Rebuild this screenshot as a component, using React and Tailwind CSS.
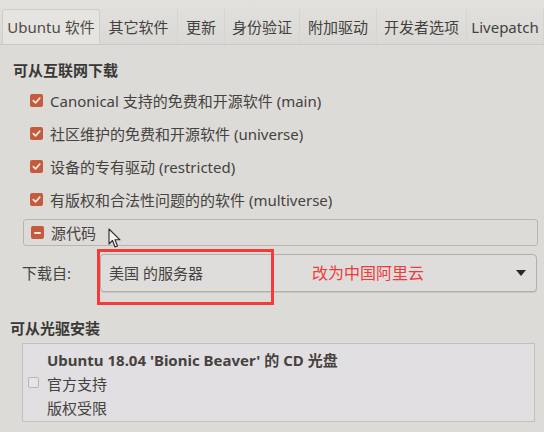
import React from 'react';

const tabs = [
    { label: 'Ubuntu 软件', w: 'w-[98px]', active: true },
    { label: '其它软件', w: 'w-[78px]' },
    { label: '更新', w: 'w-[47px]' },
    { label: '身份验证', w: 'w-[75px]' },
    { label: '附加驱动', w: 'w-[77px]' },
    { label: '开发者选项', w: 'w-[90px]' },
    { label: 'Livepatch', w: 'w-[77px]' },
];

const sources = [
    'Canonical 支持的免费和开源软件 (main)',
    '社区维护的免费和开源软件 (universe)',
    '设备的专有驱动 (restricted)',
    '有版权和合法性问题的的软件 (multiverse)',
];

function CheckedBox() {
    return (
        <span className="flex items-center justify-center w-[13px] h-[13px] rounded-[2px] bg-[#c55a3c] shrink-0">
            <svg viewBox="0 0 12 12" className="w-[11px] h-[11px]">
                <path d="M2.5 6.2 L5 8.6 L9.6 3.4" fill="none" stroke="#f4e8e2" strokeWidth="1.8" strokeLinecap="round" strokeLinejoin="round" />
            </svg>
        </span>
    );
}

export default function App() {
    return (
        <div
            className="relative w-[544px] h-[432px] overflow-hidden bg-[#dcdbd7] text-[#45423f] text-[15px] leading-[20px]"
            style={{ fontFamily: '"Noto Sans", "Noto Sans CJK SC", sans-serif' }}
        >
            {/* Tabs */}
            <div className="flex items-end h-[45px] pl-[2px] bg-gradient-to-b from-[#e2e1de] to-[#dad9d5] border-b border-[#cbc9c4]">
                {tabs.map((t) => (
                    <div
                        key={t.label}
                        className={`${t.w} h-[35px] shrink-0 flex items-center justify-center ${
                            t.active
                                ? 'bg-[#e5e4e1] border border-b-0 border-[#d0cec9] rounded-t-[3px] text-[#4d4b48]'
                                : 'border-r border-[#d6d4d0] text-[#43413e]'
                        }`}
                    >
                        {t.label}
                    </div>
                ))}
            </div>

            {/* Internet section */}
            <div className="pl-[13px] mt-[15px] font-bold text-[#3a3836]">可从互联网下载</div>
            <div className="flex flex-col mt-[4px] pl-[30px]">
                {sources.map((s) => (
                    <div key={s} className="flex items-center gap-[7px] h-[33px]">
                        <CheckedBox />
                        <span>{s}</span>
                    </div>
                ))}
            </div>

            <div className="mt-[3px] ml-[23px] w-[515px] h-[27px] flex items-center gap-[7px] pl-[7px] border border-[#bab5ae] rounded-[3px]">
                <span className="flex items-center justify-center w-[13px] h-[13px] rounded-[2px] bg-[#c55a3c] shrink-0">
                    <span className="w-[7px] h-[2px] bg-[#f4e8e2] rounded-full" />
                </span>
                <span>源代码</span>
            </div>

            {/* Download from */}
            <div className="flex items-center mt-[8px] pl-[22px] h-[38px]">
                <span className="w-[78px]">下载自:</span>
                <div className="relative flex items-center w-[437px] h-[38px] pl-[8px] pr-[10px] bg-[#dedddb] border border-[#b3b0ab] rounded-[4px] shadow-[0_1px_0_#c9c7c2]">
                    <span className="flex-1">美国 的服务器</span>
                    <span className="absolute left-[211px] top-[8px] text-[16px] leading-[20px] text-[#ef3b3b]">改为中国阿里云</span>
                    <svg viewBox="0 0 10 6" className="w-[10px] h-[6px]">
                        <path d="M0 0 L10 0 L5 6 Z" fill="#2a2826" />
                    </svg>
                </div>
            </div>

            {/* CD section */}
            <div className="pl-[10px] mt-[26px] font-bold text-[#3a3836]">可从光驱安装</div>
            <div className="mt-[5px] ml-[22px] w-[513px] h-[79px] flex items-center border border-[#c3c0bc] bg-[#e1dfe1]">
                <span className="ml-[5px] w-[11px] h-[11px] rounded-[2px] border border-[#b9b6b3] bg-[#e6e4e5] shrink-0" />
                <div className="flex flex-col ml-[8px] mt-[2px] leading-[24px]">
                    <span className="font-bold">Ubuntu 18.04 'Bionic Beaver' 的 CD 光盘</span>
                    <span>官方支持</span>
                    <span>版权受限</span>
                </div>
            </div>

            {/* Annotation rectangle */}
            <div className="absolute left-[97px] top-[249px] w-[177px] h-[56px] border-[3px] border-[#f53a3a]" />

            {/* Mouse cursor */}
            <svg viewBox="0 0 14 21" className="absolute left-[108px] top-[228px] w-[14px] h-[21px]">
                <path d="M1 1 L1 16 L4.5 12.5 L7 19 L9.5 18 L7 11.8 L12 11.8 Z" fill="#f2f1ef" stroke="#2c2a28" strokeWidth="1.1" strokeLinejoin="round" />
            </svg>
        </div>
    );
}
